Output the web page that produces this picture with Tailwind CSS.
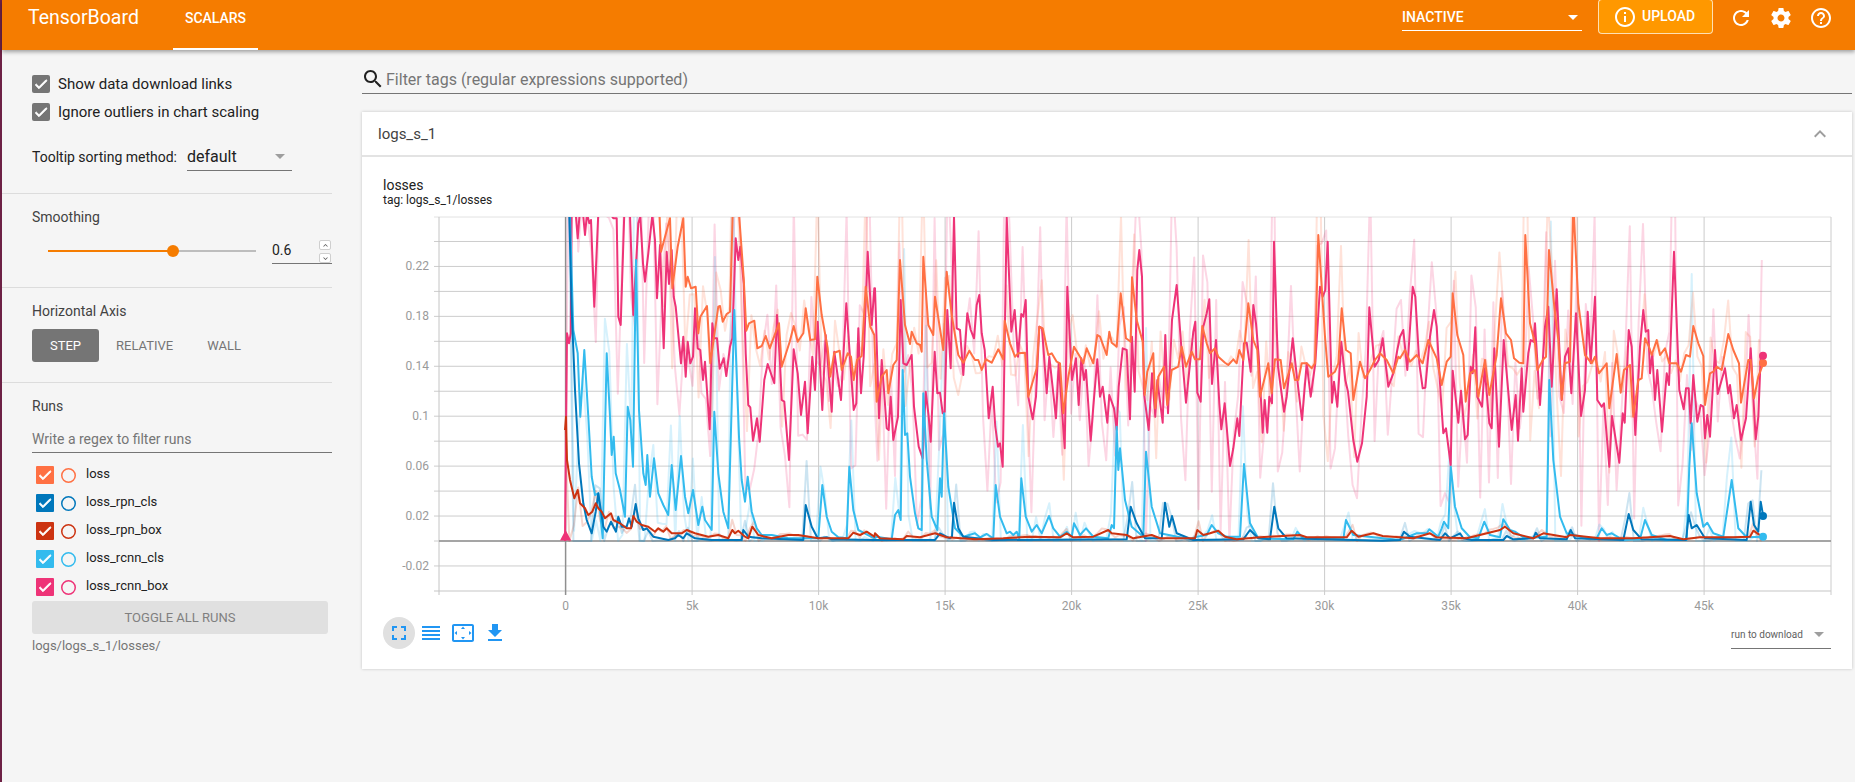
<!DOCTYPE html>
<html lang="en">
<head>
    <meta charset="UTF-8">
    <title>TensorBoard</title>
    <script src="https://cdn.jsdelivr.net/npm/@tailwindcss/browser@4"></script>
</head>
<body class="bg-[#f5f5f5] overflow-hidden [font-family:Roboto,sans-serif]">
<div class="flex h-[782px] w-[1855px] overflow-hidden">
    <div class="w-[2px] shrink-0 bg-[#6d2145]"></div>
    <div class="flex-1 flex flex-col min-w-0">

        <!-- top bar -->
        <header class="h-[50px] shrink-0 bg-[#f57c00] text-white flex items-start shadow-[0_2px_4px_rgba(0,0,0,0.35)] relative z-10">
            <div class="ml-[26px] mt-[4px] text-[19.5px] leading-[28px] w-[145px]">TensorBoard</div>
            <div class="w-[85px] h-[50px] border-b-2 border-white text-center text-[14px] font-medium leading-[20px] pt-[8px]">SCALARS</div>
            <div class="ml-auto flex items-start">
                <div class="w-[180px] h-[31px] border-b border-white flex items-center justify-between text-[14px] font-medium pt-[4px] pr-[4px]">
                    <span>INACTIVE</span>
                    <span class="w-0 h-0 border-x-[5px] border-x-transparent border-t-[5px] border-t-white"></span>
                </div>
                <div class="ml-[16px] w-[115px] h-[35px] -mt-[1px] bg-[#ff9800] border border-white/70 rounded-[4px] flex items-center pl-[15px] gap-[5px] text-[14px] font-medium">
                    <svg class="size-6 fill-white -ml-[1px]" viewBox="0 0 24 24"><path d="M11 17h2v-6h-2v6zm1-15C6.48 2 2 6.48 2 12s4.48 10 10 10 10-4.48 10-10S17.52 2 12 2zm0 18c-4.41 0-8-3.59-8-8s3.59-8 8-8 8 3.59 8 8-3.59 8-8 8zM11 9h2V7h-2v2z"/></svg>
                    <span>UPLOAD</span>
                </div>
                <div class="ml-[16px] mt-[6px] flex gap-[16px] pr-[22px]">
                    <svg class="size-6 fill-white" viewBox="0 0 24 24"><path d="M17.65 6.35C16.2 4.9 14.21 4 12 4c-4.42 0-7.99 3.58-7.99 8s3.57 8 7.99 8c3.73 0 6.84-2.55 7.73-6h-2.08c-.82 2.33-3.04 4-5.65 4-3.31 0-6-2.69-6-6s2.69-6 6-6c1.66 0 3.14.69 4.22 1.78L13 11h7V4l-2.35 2.35z"/></svg>
                    <svg class="size-6 fill-white" viewBox="0 0 24 24"><path d="M19.43 12.98c.04-.32.07-.64.07-.98s-.03-.66-.07-.98l2.11-1.65c.19-.15.24-.42.12-.64l-2-3.46c-.12-.22-.39-.3-.61-.22l-2.49 1c-.52-.4-1.08-.73-1.69-.98l-.38-2.65C14.46 2.18 14.25 2 14 2h-4c-.25 0-.46.18-.49.42l-.38 2.65c-.61.25-1.17.59-1.69.98l-2.49-1c-.23-.09-.49 0-.61.22l-2 3.46c-.13.22-.07.49.12.64l2.11 1.65c-.04.32-.07.65-.07.98s.03.66.07.98l-2.11 1.65c-.19.15-.24.42-.12.64l2 3.46c.12.22.39.3.61.22l2.49-1c.52.4 1.08.73 1.69.98l.38 2.65c.03.24.24.42.49.42h4c.25 0 .46-.18.49-.42l.38-2.65c.61-.25 1.17-.59 1.69-.98l2.49 1c.23.09.49 0 .61-.22l2-3.46c.12-.22.07-.49-.12-.64l-2.11-1.65zM12 15.5c-1.93 0-3.5-1.57-3.5-3.5s1.57-3.5 3.5-3.5 3.5 1.57 3.5 3.5-1.57 3.5-3.5 3.5z"/></svg>
                    <svg class="size-6 fill-white" viewBox="0 0 24 24"><path d="M11 18h2v-2h-2v2zm1-16C6.48 2 2 6.48 2 12s4.48 10 10 10 10-4.48 10-10S17.52 2 12 2zm0 18c-4.41 0-8-3.59-8-8s3.59-8 8-8 8 3.59 8 8-3.59 8-8 8zm0-14c-2.21 0-4 1.79-4 4h2c0-1.1.9-2 2-2s2 .9 2 2c0 2-3 1.75-3 5h2c0-2.25 3-2.5 3-5 0-2.21-1.79-4-4-4z"/></svg>
                </div>
            </div>
        </header>

        <div class="flex flex-1 min-h-0">

            <!-- sidebar -->
            <aside class="w-[330px] shrink-0 text-[#212121]">
                <section class="h-[144px] border-b border-[#dcdcdc] pl-[30px] pt-[20px]">
                    <label class="flex items-center h-[28px] gap-[8px] text-[15px]">
                        <span class="size-[18px] rounded-[2px] bg-[#757575] flex items-center justify-center"><svg class="size-[16px] fill-white stroke-white stroke-[1.5]" viewBox="0 0 24 24"><path d="M9 16.17L4.83 12l-1.41 1.41L9 19 21 7l-1.41-1.41z"/></svg></span>
                        Show data download links
                    </label>
                    <label class="flex items-center h-[28px] gap-[8px] text-[15px]">
                        <span class="size-[18px] rounded-[2px] bg-[#757575] flex items-center justify-center"><svg class="size-[16px] fill-white stroke-white stroke-[1.5]" viewBox="0 0 24 24"><path d="M9 16.17L4.83 12l-1.41 1.41L9 19 21 7l-1.41-1.41z"/></svg></span>
                        Ignore outliers in chart scaling
                    </label>
                    <div class="flex items-center mt-[17px] h-[28px]">
                        <span class="text-[14px] w-[155px]">Tooltip sorting method:</span>
                        <div class="w-[105px] h-[27px] border-b border-[#757575] flex items-center justify-between pr-[7px] text-[16px]">
                            <span>default</span>
                            <span class="w-0 h-0 border-x-[5px] border-x-transparent border-t-[5px] border-t-[#9e9e9e]"></span>
                        </div>
                    </div>
                </section>

                <section class="h-[94px] border-b border-[#dcdcdc] pl-[30px] pt-[13px]">
                    <div class="text-[14px] leading-[20px] text-[#424242]">Smoothing</div>
                    <div class="flex items-center mt-[10px] h-[28px]">
                        <div class="relative ml-[16px] w-[208px] h-[2px] bg-[#bdbdbd]">
                            <div class="h-full w-[125px] bg-[#f57c00]"></div>
                            <div class="absolute left-[119px] -top-[5px] size-[12px] rounded-full bg-[#f57c00]"></div>
                        </div>
                        <div class="relative ml-[16px] w-[60px] h-[27px] -mt-[1px] border-b border-[#757575] text-[14px] leading-[26px]">
                            0.6
                            <span class="absolute right-[1px] top-[3px] w-[12px] h-[10px] border border-[#cfcfcf] rounded-[2px] bg-white flex items-center justify-center"><svg class="size-[9px] fill-[#555555]" viewBox="0 0 24 24"><path d="M12 8l-6 6 1.41 1.41L12 10.83l4.59 4.58L18 14z"/></svg></span>
                            <span class="absolute right-[1px] top-[16px] w-[12px] h-[10px] border border-[#cfcfcf] rounded-[2px] bg-white flex items-center justify-center"><svg class="size-[9px] fill-[#555555] rotate-180" viewBox="0 0 24 24"><path d="M12 8l-6 6 1.41 1.41L12 10.83l4.59 4.58L18 14z"/></svg></span>
                        </div>
                    </div>
                </section>

                <section class="h-[95px] border-b border-[#dcdcdc] pl-[30px] pt-[13px]">
                    <div class="text-[14px] leading-[20px] text-[#424242]">Horizontal Axis</div>
                    <div class="flex mt-[8px] h-[33px] text-[13px] text-[#757575]">
                        <div class="w-[67px] rounded-[3px] bg-[#757575] text-white flex items-center justify-center">STEP</div>
                        <div class="px-[17px] flex items-center">RELATIVE</div>
                        <div class="px-[17px] flex items-center">WALL</div>
                    </div>
                </section>

                <section class="pl-[30px] pt-[13px]">
                    <div class="text-[14px] leading-[20px] text-[#424242]">Runs</div>
                    <div class="mt-[10px] w-[300px] h-[27px] border-b border-[#757575] text-[14px] leading-[26px] text-[#757575]">Write a regex to filter runs</div>
                    <div class="mt-[8px] text-[13px] pl-[4px]">
                        <div class="flex items-center h-[28px]">
                            <span class="size-[18px] rounded-[1px] bg-[#ff7043] flex items-center justify-center"><svg class="size-[16px] fill-white stroke-white stroke-[1.5]" viewBox="0 0 24 24"><path d="M9 16.17L4.83 12l-1.41 1.41L9 19 21 7l-1.41-1.41z"/></svg></span>
                            <svg class="ml-[7px] size-[15px] fill-none stroke-[#ff7043] stroke-[1.5]" viewBox="0 0 15 15"><circle cx="7.5" cy="7.5" r="6.75"/></svg>
                            <span class="ml-[10px] -mt-[3px]">loss</span>
                        </div>
                        <div class="flex items-center h-[28px]">
                            <span class="size-[18px] rounded-[1px] bg-[#0077bb] flex items-center justify-center"><svg class="size-[16px] fill-white stroke-white stroke-[1.5]" viewBox="0 0 24 24"><path d="M9 16.17L4.83 12l-1.41 1.41L9 19 21 7l-1.41-1.41z"/></svg></span>
                            <svg class="ml-[7px] size-[15px] fill-none stroke-[#0077bb] stroke-[1.5]" viewBox="0 0 15 15"><circle cx="7.5" cy="7.5" r="6.75"/></svg>
                            <span class="ml-[10px] -mt-[3px]">loss_rpn_cls</span>
                        </div>
                        <div class="flex items-center h-[28px]">
                            <span class="size-[18px] rounded-[1px] bg-[#cc3311] flex items-center justify-center"><svg class="size-[16px] fill-white stroke-white stroke-[1.5]" viewBox="0 0 24 24"><path d="M9 16.17L4.83 12l-1.41 1.41L9 19 21 7l-1.41-1.41z"/></svg></span>
                            <svg class="ml-[7px] size-[15px] fill-none stroke-[#cc3311] stroke-[1.5]" viewBox="0 0 15 15"><circle cx="7.5" cy="7.5" r="6.75"/></svg>
                            <span class="ml-[10px] -mt-[3px]">loss_rpn_box</span>
                        </div>
                        <div class="flex items-center h-[28px]">
                            <span class="size-[18px] rounded-[1px] bg-[#33bbee] flex items-center justify-center"><svg class="size-[16px] fill-white stroke-white stroke-[1.5]" viewBox="0 0 24 24"><path d="M9 16.17L4.83 12l-1.41 1.41L9 19 21 7l-1.41-1.41z"/></svg></span>
                            <svg class="ml-[7px] size-[15px] fill-none stroke-[#33bbee] stroke-[1.5]" viewBox="0 0 15 15"><circle cx="7.5" cy="7.5" r="6.75"/></svg>
                            <span class="ml-[10px] -mt-[3px]">loss_rcnn_cls</span>
                        </div>
                        <div class="flex items-center h-[28px]">
                            <span class="size-[18px] rounded-[1px] bg-[#ee3377] flex items-center justify-center"><svg class="size-[16px] fill-white stroke-white stroke-[1.5]" viewBox="0 0 24 24"><path d="M9 16.17L4.83 12l-1.41 1.41L9 19 21 7l-1.41-1.41z"/></svg></span>
                            <svg class="ml-[7px] size-[15px] fill-none stroke-[#ee3377] stroke-[1.5]" viewBox="0 0 15 15"><circle cx="7.5" cy="7.5" r="6.75"/></svg>
                            <span class="ml-[10px] -mt-[3px]">loss_rcnn_box</span>
                        </div>
                    </div>
                    <div class="w-[296px] h-[33px] rounded-[3px] bg-[#e0e0e0] text-[#7f7f7f] text-[13px] flex items-center justify-center">TOGGLE ALL RUNS</div>
                    <div class="mt-[2px] text-[13px] leading-[20px] text-[#757575]">logs/logs_s_1/losses/</div>
                </section>
            </aside>

            <!-- main -->
            <main class="ml-[30px] w-[1490px]">
                <div class="mt-[14px] h-[30px] border-b border-[#757575] flex items-center text-[16px] text-[#757575]">
                    <svg class="size-6 fill-[#212121] shrink-0 -ml-[1px] mt-[1px]" viewBox="0 0 24 24"><path d="M15.5 14h-.79l-.28-.27C15.41 12.59 16 11.11 16 9.5 16 5.91 13.09 3 9.5 3S3 5.91 3 9.5 5.91 16 9.5 16c1.61 0 3.09-.59 4.23-1.57l.27.28v.79l5 4.99L20.49 19l-4.99-5zm-6 0C7.01 14 5 11.99 5 9.5S7.01 5 9.5 5 14 7.01 14 9.5 11.99 14 9.5 14z"/></svg>
                    <span class="ml-[1px] mt-[3px]">Filter tags (regular expressions supported)</span>
                </div>

                <div class="mt-[18px] bg-white shadow-[0_0_3px_rgba(0,0,0,0.2)]">
                    <div class="h-[45px] border-b-2 border-[#e3e3e3] flex items-center justify-between pl-[16px] pr-[20px] text-[15px] text-[#424242]">
                        <span class="mt-[1px]">logs_s_1</span>
                        <svg class="size-6 fill-[#9e9e9e]" viewBox="0 0 24 24"><path d="M12 8l-6 6 1.41 1.41L12 10.83l4.59 4.58L18 14z"/></svg>
                    </div>
                    <div class="h-[512px] pl-[21px] pt-[19px] text-[#212121]">
                        <div class="text-[14px] leading-[18px]">losses</div>
                        <div class="text-[12px] leading-[14px] -mt-[1px]">tag: logs_s_1/losses</div>
                        <svg id="chart" class="block mt-[3px] -ml-[3px]" width="1460" height="405" viewBox="380 210 1460 405"></svg>
                        <div class="flex items-center justify-between mt-[2px] pr-[21px] h-[32px]">
                            <div class="flex items-center">
                                <span class="size-[32px] rounded-full bg-[#e0e0e0] flex items-center justify-center"><svg class="size-6 fill-[#2196f3]" viewBox="0 0 24 24"><path d="M7 14H5v5h5v-2H7v-3zm-2-4h2V7h3V5H5v5zm12 7h-3v2h5v-5h-2v3zM14 5v2h3v3h2V5h-5z"/></svg></span>
                                <svg class="ml-[4px] size-6 fill-[#2196f3]" viewBox="0 0 24 24"><path d="M3 15h18v-2H3v2zm0 4h18v-2H3v2zm0-8h18V9H3v2zm0-6v2h18V5H3z"/></svg>
                                <svg class="ml-[8px] size-6 fill-[#2196f3]" viewBox="0 0 24 24"><path d="M12.01 5.5L10 8h4l-1.99-2.5zM18 10v4l2.5-1.99L18 10zM6 10l-2.5 2.01L6 14v-4zm8 6h-4l2.01 2.5L14 16zm7-13H3c-1.1 0-2 .9-2 2v14c0 1.1.9 2 2 2h18c1.1 0 2-.9 2-2V5c0-1.1-.9-2-2-2zm0 16.01H3V4.99h18v14.02z"/></svg>
                                <svg class="ml-[8px] size-6 fill-[#2196f3]" viewBox="0 0 24 24"><path d="M19 9h-4V3H9v6H5l7 7 7-7zM5 18v2h14v-2H5z"/></svg>
                            </div>
                            <div class="w-[100px] h-[28px] mt-[4px] border-b border-[#757575] flex items-center justify-between pr-[7px] text-[10px] text-[#616161]">
                                <span>run to download</span>
                                <span class="w-0 h-0 border-x-[5px] border-x-transparent border-t-[5px] border-t-[#9e9e9e]"></span>
                            </div>
                        </div>
                    </div>
                </div>
            </main>
        </div>
    </div>
</div>

<script>
    // traced smoothed lines, grouped by the crop they were read from
    const A = [555, 210], B = [860, 200], C = [1400, 200];

    const pink = [
        [A, [30,993, 36,370, 42,400, 47,370, 50,10, 62,10, 68,85, 74,10, 84,10, 90,75, 96,10, 103,40, 108,30, 118,290, 130,10, 165,10, 175,25, 185,25, 190,320, 197,345, 208,10, 225,15, 235,315, 250,40, 256,20, 264,160, 270,215, 280,130, 292,15, 300,90, 306,265, 315,105, 326,415, 335,125, 342,222, 350,120, 356,260, 362,290, 378,460, 385,380, 392,500, 398,395, 406,460, 414,440, 420,295, 428,415, 436,420, 444,510, 450,455, 464,658, 472,340, 478,385, 486,385, 494,476, 506,445, 514,498, 525,410, 532,385, 542,85, 550,150, 556,110, 566,220, 572,430, 580,585, 586,592, 594,692, 606,625, 614,695, 628,510, 638,462, 658,520, 666,315, 674,440, 680,570, 688,575, 702,750, 716,418, 728,490, 738,615, 750,515, 758,670, 772,440, 780,540, 788,335, 802,600, 812,375, 830,605, 838,425, 858,570, 874,280, 884,430, 896,600, 904,580, 910,355, 918,550, 926,440, 938,125, 950,345, 958,235]],
        [B, [45,265, 57,655, 65,480, 72,570, 80,685, 86,690, 92,590, 100,720, 114,650, 122,300, 130,490, 140,495, 155,465, 162,620, 176,740, 188,775, 197,575, 206,650, 212,725, 224,455, 232,580, 240,578, 248,640, 254,635, 262,330, 272,505, 282,50, 290,385, 300,390, 310,525, 322,340, 332,390, 342,415, 350,315, 358,285, 365,400, 374,450, 386,655, 398,560, 406,680, 414,740, 420,730, 428,800, 440,50, 454,395, 464,330, 474,470, 484,342, 490,350, 497,300, 505,590, 518,658, 528,590, 538,380, 546,385, 560,580, 568,470, 588,655, 596,490, 614,745, 622,260, 636,540, 648,475, 656,615, 664,475, 672,540, 678,510, 692,722, 700,620, 712,478, 720,590, 728,560, 742,668, 748,585, 762,625, 770,690, 776,560, 788,445, 800,450, 810,658, 816,410, 824,575, 832,210, 838,150, 846,230, 852,580, 866,690, 876,520, 886,650, 892,540, 908,668, 916,405, 924,640, 936,360, 950,255, 964,440, 978,608, 1000,395, 1006,365, 1012,578, 1022,605, 1030,380, 1040,340, 1048,298, 1056,552, 1068,420, 1078,610, 1084,688, 1094,610, 1110,798, 1120,745, 1132,655, 1138,708, 1152,430, 1160,428, 1172,515, 1180,315, 1188,370, 1196,470, 1208,698, 1214,600, 1222,698, 1228,590, 1236,610, 1242,125, 1254,500, 1272,635, 1280,590, 1298,415, 1310,525, 1326,660, 1340,490, 1352,590, 1366,490, 1380,260, 1388,290, 1396,270, 1403,125, 1416,608, 1422,545, 1432,620, 1444,425, 1456,540, 1464,575, 1480,720, 1492,785, 1506,730, 1520,590, 1528,322, 1544,500, 1556,480, 1568,415, 1585,560, 1600,520, 1612,450]],
        [C, [0,410, 10,390, 22,510, 38,260, 46,290, 58,490, 68,565, 76,563, 90,410, 102,330, 110,380, 122,585, 130,700, 138,685, 152,795, 158,512, 175,668, 183,572, 195,718, 203,705, 212,500, 218,520, 226,382, 232,590, 246,620, 254,505, 268,670, 275,685, 283,445, 297,740, 311,420, 335,690, 347,585, 354,722, 365,505, 370,635, 385,460, 392,420, 400,425, 405,370, 420,615, 435,380, 445,320, 455,560, 470,268, 485,600, 495,470, 505,445, 514,580, 528,340, 543,648, 555,570, 563,335, 572,490, 585,290, 592,600, 605,620, 612,610, 628,800, 636,648, 658,788, 668,640, 674,668, 686,390, 695,440, 706,705, 720,440, 730,330, 737,395, 745,390, 750,520, 757,460, 765,600, 772,510, 786,695, 800,520, 807,555, 822,155, 838,570, 851,628, 858,565, 866,565, 872,670, 880,525, 892,665, 902,615, 910,620, 915,715, 922,645, 930,710, 945,450, 953,582, 975,505, 985,580, 990,555, 1002,655, 1010,615, 1023,720, 1038,655, 1052,445, 1067,718, 1075,650, 1082,470, 1090,468]]
    ];
    const orange = [
        [A, [312,-20, 318,125, 345,25, 352,235, 368,110, 385,25, 392,230, 398,200, 408,235, 422,230, 430,370, 436,320, 456,288, 466,460, 490,290, 495,288, 503,335, 515,312, 525,305, 533,10, 552,10, 566,205, 574,362, 582,340, 598,332, 607,415, 620,408, 632,378, 644,415, 672,340, 680,470, 704,395, 716,348, 728,395, 745,370, 752,295, 766,390, 780,388, 787,200, 800,315, 818,415, 826,500, 838,428, 854,422, 860,480, 878,430, 888,440, 896,510, 906,450, 920,438, 932,230, 946,350, 958,375]],
        [B, [30,375, 40,380, 50,605, 65,530, 80,510, 85,580, 100,495, 110,480, 120,180, 135,375, 150,432, 155,395, 170,430, 180,435, 185,455, 190,170, 205,375, 220,405, 225,290, 250,450, 260,215, 275,345, 295,465, 310,488, 328,452, 345,480, 355,480, 365,510, 378,478, 395,488, 415,448, 430,478, 434,362, 450,430, 465,470, 475,460, 495,458, 505,590, 530,505, 538,380, 548,385, 565,465, 575,460, 590,485, 600,490, 610,640, 625,530, 642,440, 660,470, 670,490, 680,445, 700,490, 712,405, 720,410, 740,465, 748,395, 755,428, 770,440, 782,280, 798,415, 812,425, 816,232, 830,360, 848,425, 854,585, 862,515, 880,460, 886,625, 895,530, 912,500, 922,615, 935,510, 955,500, 965,440, 978,500, 995,455, 1005,478, 1020,478, 1027,378, 1040,430, 1050,460, 1065,445, 1075,470, 1095,488, 1105,495, 1120,478, 1130,490, 1138,450, 1150,480, 1165,310, 1180,420, 1192,450, 1200,590, 1225,490, 1235,580, 1245,478, 1262,480, 1272,565, 1295,490, 1305,540, 1315,540, 1325,490, 1340,490, 1355,505, 1365,490, 1375,105, 1395,410, 1405,530, 1425,515, 1435,490, 1445,325, 1458,450, 1472,460, 1480,600, 1500,485, 1515,535, 1530,510, 1545,480, 1560,460, 1580,480, 1600,520, 1615,470]],
        [C, [0,475, 15,450, 30,485, 50,465, 68,490, 75,460, 85,420, 110,475, 125,555, 140,485, 152,470, 158,280, 172,405, 190,465, 197,605, 210,520, 225,510, 235,590, 255,480, 268,585, 290,465, 303,295, 318,400, 333,420, 342,475, 358,488, 370,490, 376,105, 390,370, 405,430, 412,510, 430,478, 438,470, 447,150, 462,310, 475,420, 485,598, 495,490, 510,485, 520,10, 535,310, 555,465, 575,490, 585,470, 597,520, 620,490, 628,625, 650,462, 662,578, 672,510, 690,495, 700,650, 715,540, 725,535, 735,415, 747,440, 755,465, 770,420, 780,465, 795,445, 808,490, 830,490, 843,515, 858,465, 870,470, 880,378, 895,430, 910,468, 915,615, 930,520, 940,515, 950,500, 965,510, 985,402, 1000,450, 1017,490, 1023,608, 1045,480, 1052,480, 1062,595, 1075,530, 1090,490]]
    ];
    const cyan = [
        [A, [44,-20, 55,360, 68,430, 76,620, 88,420, 100,620, 110,800, 120,855, 130,850, 143,985, 155,430, 165,620, 170,735, 176,680, 182,790, 195,840, 210,920, 218,590, 226,630, 234,770, 243,150, 252,600, 265,790, 272,825, 277,735, 285,860, 297,745, 310,850, 325,885, 340,915, 350,765, 362,900, 378,738, 390,860, 400,910, 414,840, 430,945, 442,890, 450,930, 470,960, 478,605, 490,790, 505,905, 520,955, 538,300, 552,680, 560,810, 570,875, 578,800, 590,905, 605,955, 620,975, 650,975, 700,985, 790,985, 802,825, 815,920, 830,965, 850,982, 875,985, 883,770, 895,900, 910,960, 958,985]],
        [B, [50,1010, 95,1018, 105,945, 115,930, 122,960, 128,510, 135,705, 142,700, 150,830, 165,940, 175,985, 185,990, 190,580, 200,780, 215,950, 232,990, 240,835, 245,890, 252,640, 265,860, 285,985, 310,1010, 345,1000, 360,1012, 380,1002, 400,1015, 407,855, 420,950, 440,1000, 450,995, 460,1005, 470,995, 478,1015, 484,835, 497,950, 515,995, 530,975, 545,1000, 567,948, 580,985, 600,1010, 620,995, 635,1010, 642,970, 660,1005, 678,985, 700,1010, 745,1015, 755,975, 762,985, 770,680, 775,810, 780,745, 795,900, 815,980, 850,1010, 858,755, 875,920, 900,1000, 990,1018, 1010,1010, 1040,1005, 1055,975, 1075,1000, 1100,1010, 1140,1010, 1152,792, 1170,970, 1195,1015, 1300,1018, 1312,995, 1330,1015, 1450,1018, 1458,960, 1480,1005, 1568,1015]],
        [C, [0,1020, 50,1000, 60,1000, 80,1000, 88,988, 115,1010, 125,985, 132,965, 145,985, 152,800, 165,920, 185,985, 210,1012, 235,1015, 253,965, 270,1005, 300,1012, 310,958, 330,990, 345,995, 360,1005, 375,1015, 420,1012, 440,1010, 448,540, 460,780, 480,950, 500,1000, 560,1015, 590,1015, 605,985, 620,1005, 635,1000, 670,1020, 720,1018, 735,960, 755,1005, 800,1020, 860,1020, 868,800, 875,670, 890,880, 910,980, 922,968, 940,1000, 970,1010, 995,840, 1015,985, 1040,1012, 1090,1010]]
    ];
    const blue = [
        [A, [42,-20, 50,300, 60,540, 72,760, 85,880, 95,930, 110,970, 122,905, 130,850, 145,950, 155,965, 168,935, 183,965, 190,920, 200,950, 215,950, 222,925, 230,950, 242,882, 250,925, 265,960, 275,955, 295,980, 340,990, 360,985, 370,975, 385,985, 395,970, 420,985, 470,990, 530,990, 560,990, 565,960, 580,980, 620,985, 745,990, 752,885, 770,950, 788,985, 815,982, 830,988, 958,990]],
        [B, [50,1020, 225,1020, 240,1000, 270,1015, 276,1010, 282,908, 295,985, 310,1010, 400,1020, 800,1018, 812,920, 830,970, 855,1015, 905,1015, 915,908, 928,980, 936,948, 950,1000, 1000,1020, 1150,1018, 1170,990, 1195,1015, 1230,1018, 1243,920, 1255,985, 1280,1015, 1568,1022]],
        [C, [0,1020, 12,995, 30,1010, 120,1020, 135,1000, 150,1015, 180,1000, 190,1015, 215,1020, 310,1020, 320,1008, 340,1018, 400,1015, 407,998, 420,1015, 500,1018, 512,990, 525,1015, 670,1020, 686,942, 700,990, 725,1018, 858,1020, 866,945, 875,985, 890,975, 915,1015, 1040,1020, 1052,905, 1062,975, 1075,995, 1082,905, 1090,950]]
    ];
    const red = [
        [A, [30,660, 33,620, 36,750, 45,810, 58,865, 68,840, 75,880, 90,895, 100,915, 112,905, 122,880, 130,895, 140,905, 150,925, 168,910, 175,930, 195,940, 215,955, 228,955, 235,918, 245,935, 260,945, 280,950, 300,965, 310,955, 325,965, 335,955, 350,970, 380,970, 395,960, 420,970, 460,980, 490,975, 520,985, 532,960, 540,970, 550,962, 570,980, 580,985, 592,950, 610,975, 650,985, 700,975, 730,975, 790,985, 860,985, 880,985, 895,968, 915,975, 935,965, 958,980]],
        [B, [45,1000, 60,1015, 130,1018, 140,1008, 180,1012, 225,1000, 260,1012, 350,1018, 430,1015, 480,1012, 510,1010, 600,1012, 620,1000, 640,1012, 700,1010, 745,990, 755,1000, 800,1005, 820,1015, 875,1005, 900,1015, 1005,1015, 1012,990, 1030,1005, 1050,1000, 1075,992, 1095,1010, 1130,1018, 1200,1012, 1320,1005, 1340,1012, 1460,1012, 1475,992, 1495,1010, 1540,1000, 1568,1008]],
        [C, [0,1012, 40,1015, 90,1000, 110,1012, 200,1015, 300,990, 315,980, 340,1000, 400,1015, 430,1000, 500,1012, 510,1005, 600,1015, 700,1015, 810,1008, 850,1018, 900,1012, 1000,1012, 1050,1010, 1060,992, 1090,1012]]
    ];

    // crop coordinates to page coordinates
    function toPoints(parts) {
        const out = [];
        parts.forEach(([o, d]) => {
            for (let i = 0; i < d.length; i += 2) {
                const x = o[0] + d[i] / 3, y = o[1] + d[i + 1] / 3;
                if (!out.length || x > out[out.length - 1][0]) out.push([x, y]);
            }
        });
        return out;
    }

    function yAt(pts, x) {
        for (let i = 1; i < pts.length; i++) {
            if (x <= pts[i][0]) {
                const t = (x - pts[i - 1][0]) / (pts[i][0] - pts[i - 1][0]);
                return pts[i - 1][1] + t * (pts[i][1] - pts[i - 1][1]);
            }
        }
        return pts[pts.length - 1][1];
    }

    // raw values: undo the 0.6 smoothing, with a bit of seeded noise
    function rawPoints(pts, noise) {
        let seed = 7, prev = yAt(pts, pts[0][0]);
        const rnd = () => (seed = (seed * 16807) % 2147483647) / 2147483647 - 0.5;
        const out = [];
        for (let x = pts[0][0]; x <= pts[pts.length - 1][0]; x += 4.4) {
            const s = yAt(pts, x);
            const r = (s - 0.6 * prev) / 0.4 + rnd() * noise;
            out.push([x, Math.min(r, 541)]);
            prev = s;
        }
        return out;
    }

    const ZERO = 541, STEP_Y = 24.96, X0 = 565.6, STEP_X = 126.5, LEFT = 439, RIGHT = 1831, TOP = 217, BOTTOM = 591;
    const NS = 'http://www.w3.org/2000/svg';
    const chart = document.getElementById('chart');

    function add(tag, attrs, text, parent) {
        const el = document.createElementNS(NS, tag);
        Object.keys(attrs).forEach(k => el.setAttribute(k, attrs[k]));
        if (text) el.textContent = text;
        (parent || chart).appendChild(el);
        return el;
    }

    // grid
    for (let n = -1; n <= 12; n++) {
        const y = ZERO - n * STEP_Y;
        add('line', { x1: LEFT - 5, x2: RIGHT, y1: y, y2: y, stroke: '#cccccc', 'stroke-width': 1 });
    }
    add('line', { x1: LEFT - 5, x2: RIGHT, y1: TOP, y2: TOP, stroke: '#e2e2e2', 'stroke-width': 1 });
    add('line', { x1: LEFT - 5, x2: RIGHT, y1: BOTTOM, y2: BOTTOM, stroke: '#e2e2e2', 'stroke-width': 2 });
    add('line', { x1: LEFT, x2: LEFT, y1: TOP, y2: BOTTOM + 4, stroke: '#c4c4c4', 'stroke-width': 1 });
    add('line', { x1: RIGHT, x2: RIGHT, y1: TOP, y2: BOTTOM + 4, stroke: '#cccccc', 'stroke-width': 1 });
    for (let k = 1; k <= 9; k++) {
        const x = X0 + k * STEP_X;
        add('line', { x1: x, x2: x, y1: TOP, y2: BOTTOM + 4, stroke: '#cccccc', 'stroke-width': 1 });
    }
    add('line', { x1: X0, x2: X0, y1: TOP, y2: BOTTOM + 4, stroke: '#8f8f8f', 'stroke-width': 1.5 });
    add('line', { x1: LEFT, x2: RIGHT, y1: ZERO, y2: ZERO, stroke: '#8f8f8f', 'stroke-width': 1.5 });

    // axis labels
    const labelStyle = { fill: '#9a9a9a', 'font-family': 'Roboto, sans-serif', 'font-size': 12 };
    [[0.22, 11], [0.18, 9], [0.14, 7], [0.1, 5], [0.06, 3], [0.02, 1], [-0.02, -1]].forEach(([v, n]) => {
        add('text', { ...labelStyle, x: 429, y: ZERO - n * STEP_Y + 4, 'text-anchor': 'end' }, String(v));
    });
    ['0', '5k', '10k', '15k', '20k', '25k', '30k', '35k', '40k', '45k'].forEach((t, k) => {
        add('text', { ...labelStyle, x: X0 + k * STEP_X, y: 610, 'text-anchor': 'middle' }, t);
    });

    // lines
    const defs = add('defs', {});
    add('rect', { x: LEFT, y: TOP, width: RIGHT - LEFT, height: BOTTOM - TOP }, '', add('clipPath', { id: 'plot' }, '', defs));
    const plot = add('g', { 'clip-path': 'url(#plot)', fill: 'none', 'stroke-linejoin': 'round' });
    const toD = pts => 'M' + pts.map(p => p[0].toFixed(1) + ' ' + p[1].toFixed(1)).join('L');

    const series = [
        { data: pink, color: '#ee3377', noise: 26 },
        { data: cyan, color: '#33bbee', noise: 2 },
        { data: blue, color: '#0077bb', noise: 1 },
        { data: red, color: '#cc3311', noise: 3 },
        { data: orange, color: '#ff7043', noise: 10 }
    ];
    series.forEach(s => {
        s.pts = toPoints(s.data);
        add('path', { d: toD(rawPoints(s.pts, s.noise)), stroke: s.color, 'stroke-opacity': 0.2, 'stroke-width': 2 }, '', plot);
    });
    series.forEach(s => add('path', { d: toD(s.pts), stroke: s.color, 'stroke-width': 2 }, '', plot));

    // start marker and last-value dots
    add('path', { d: 'M560 540.5L565.6 530L571.2 540.5Z', fill: '#ee3377' });
    [['#33bbee', 536.7], ['#0077bb', 516], ['#ff7043', 363], ['#ee3377', 355.7]].forEach(([c, y]) => {
        add('circle', { cx: 1763, cy: y, r: 4, fill: c });
    });
</script>
</body>
</html>
